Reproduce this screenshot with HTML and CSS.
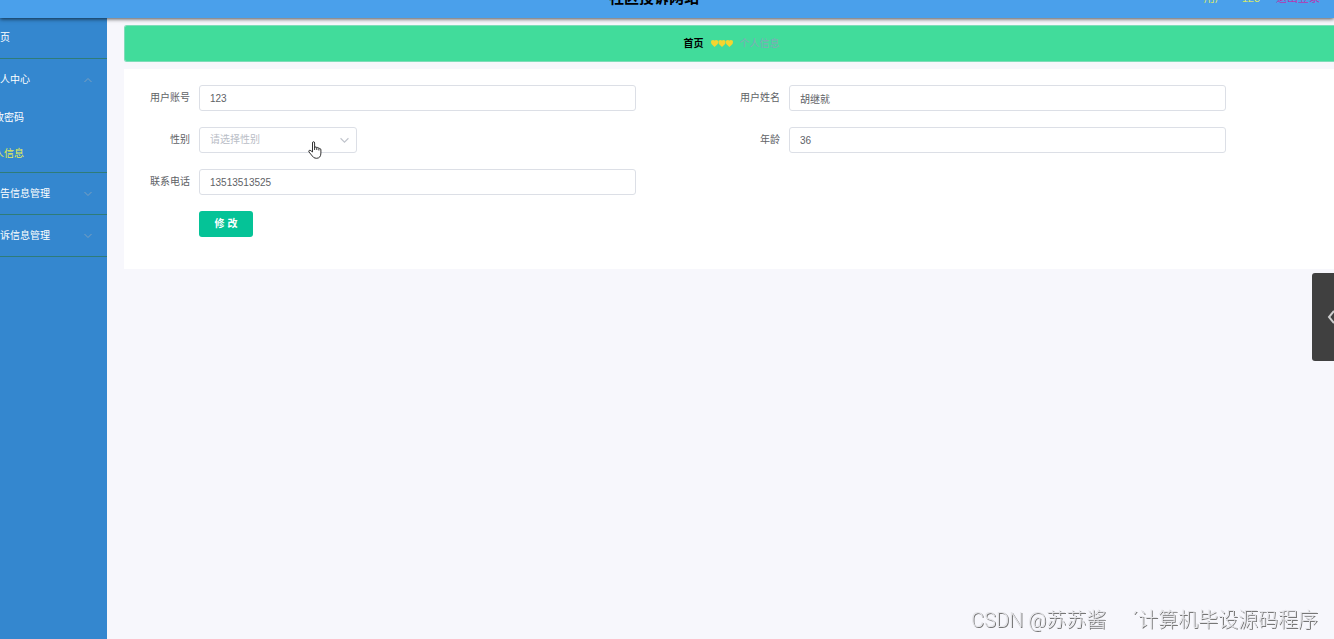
FILE: index.html
```html
<!DOCTYPE html>
<html lang="zh-CN">

<head>
    <meta charset="UTF-8">
    <meta name="viewport" content="width=device-width, initial-scale=1.0">
    <title>社区投诉网站</title>
    <link rel="stylesheet" href="styles.css">
</head>

<body>
    <header class="header">
        <h1 class="header__title">社区投诉网站</h1>
        <div class="header__user">
            <span>用户</span>
            <span>123</span>
            <a class="header__logout" href="#">退出登录</a>
        </div>
    </header>

    <div class="container">
        <nav class="sidebar">
            <a class="menu__title" href="#">首页</a>
            <div class="menu__group">
                <button class="menu__title" type="button">个人中心
                    <svg class="arrow" viewBox="0 0 8 8"><path d="M0.5 6 L4 2.5 L7.5 6" /></svg>
                </button>
                <a class="menu__item" href="#">修改密码</a>
                <a class="menu__item active" href="#">个人信息</a>
            </div>
            <button class="menu__title" type="button">公告信息管理
                <svg class="arrow" viewBox="0 0 8 8"><path d="M0.5 2 L4 5.5 L7.5 2" /></svg>
            </button>
            <button class="menu__title" type="button">投诉信息管理
                <svg class="arrow" viewBox="0 0 8 8"><path d="M0.5 2 L4 5.5 L7.5 2" /></svg>
            </button>
        </nav>

        <main class="main">
            <div class="breadcrumb">
                <a class="breadcrumb__home" href="#">首页</a>
                <svg class="breadcrumb__hearts" viewBox="0 0 22 7">
                    <path d="M3.6 7 L0.5 4 Q-0.2 2.6 0.2 0.8 Q1.8 -0.4 3.6 0.5 Q5.4 -0.4 7 0.8 Q7.4 2.6 6.7 4 Z" />
                    <path d="M11 7 L7.9 4 Q7.2 2.6 7.6 0.8 Q9.2 -0.4 11 0.5 Q12.8 -0.4 14.4 0.8 Q14.8 2.6 14.1 4 Z" />
                    <path d="M18.4 7 L15.3 4 Q14.6 2.6 15 0.8 Q16.6 -0.4 18.4 0.5 Q20.2 -0.4 21.8 0.8 Q22.2 2.6 21.5 4 Z" />
                </svg>
                <span class="breadcrumb__now">个人信息</span>
            </div>

            <form class="form">
                <div class="field">
                    <label for="account">用户账号</label>
                    <input id="account" type="text" value="123">
                </div>
                <div class="field">
                    <label for="name">用户姓名</label>
                    <input id="name" type="text" value="胡继就">
                </div>
                <div class="field">
                    <label for="gender">性别</label>
                    <div class="select">
                        <select id="gender">
                            <option value="">请选择性别</option>
                            <option>男</option>
                            <option>女</option>
                        </select>
                        <svg class="select__arrow" viewBox="0 0 8 8"><path d="M0.5 2 L4 5.5 L7.5 2" /></svg>
                        <svg class="pointer" viewBox="0 0 14 18">
                            <path d="M4.5 11 V2 Q4.5 0.7 5.5 0.7 Q6.6 0.7 6.6 2 V7 Q6.8 5.8 7.8 5.9 Q8.8 6 8.8 7 Q9.2 6.3 10 6.5 Q10.9 6.7 10.9 7.8 Q11.4 7.2 12.2 7.5 Q12.9 7.8 12.9 9 V12 Q12.9 17.3 8.3 17.3 Q5.6 17.3 4.3 15 L1 11 Q0.4 9.9 1.2 9.4 Q2.1 8.9 3 9.8 Z M6.6 7 V9 M8.8 7 V9 M10.9 8 V9.5" />
                        </svg>
                    </div>
                </div>
                <div class="field">
                    <label for="age">年龄</label>
                    <input id="age" type="text" value="36">
                </div>
                <div class="field">
                    <label for="phone">联系电话</label>
                    <input id="phone" type="text" value="13513513525">
                </div>
                <div class="form__btn">
                    <button class="submit" type="button">修 改</button>
                </div>
            </form>
        </main>
    </div>

    <button class="drawer" type="button" aria-label="展开">
        <svg viewBox="0 0 8 14"><path d="M7 1 L2 7 L7 13" /></svg>
    </button>

    <div class="watermark">
        <span>CSDN @苏苏酱</span>
        <span>´计算机毕设源码程序</span>
    </div>
</body>

</html>
```
FILE: styles.css
```css
* {
    margin: 0;
    padding: 0;
    box-sizing: border-box;
}

body {
    display: flex;
    flex-direction: column;
    height: 100vh;
    overflow: hidden;
    background-color: #f7f7fc;
    color: #606266;
    font-family: "Liberation Sans", "Noto Sans CJK SC", sans-serif;
    font-size: 10px;
    line-height: 16px;
}

a {
    color: inherit;
    text-decoration: none;
}

button,
input,
select {
    font: inherit;
    color: inherit;
}

button {
    border: 0;
    cursor: pointer;
}

svg {
    fill: none;
    stroke: currentColor;
}

/* header */
.header {
    display: grid;
    grid-template-columns: 1fr auto 1fr;
    align-items: center;
    flex-shrink: 0;
    height: 40px;
    margin-top: -22px;
    padding-right: 14px;
    background-color: #4aa0eb;
    box-shadow: 0 1px 4px rgba(0, 0, 0, 0.7);
    position: relative;
}

.header__title {
    grid-column: 2;
    margin-right: 12px;
    color: #000;
    font-size: 15px;
    line-height: 24px;
}

.header__user {
    display: flex;
    justify-content: flex-end;
    gap: 16px;
    color: #d5e86c;
    font-size: 11px;
}

.header__logout {
    color: #b637b0;
}

.container {
    display: flex;
    flex: 1;
}

/* sidebar */
.sidebar {
    width: 137px;
    margin-left: -30px;
    flex-shrink: 0;
    background-color: #3487cf;
    color: #fff;
}

.menu__title {
    display: flex;
    align-items: center;
    justify-content: space-between;
    width: 100%;
    height: 41px;
    padding: 0 15px 0 20px;
    background: none;
    border-bottom: 1px solid #2f7c78;
}

.menu__group {
    border-bottom: 1px solid #2f7c78;
}

.menu__group .menu__title {
    border-bottom: 0;
}

.menu__group ~ .menu__title {
    height: 42px;
}

.menu__item {
    display: flex;
    align-items: center;
    height: 36px;
    padding-left: 14px;
}

.menu__item.active {
    color: #e6ef51;
}

.arrow {
    width: 8px;
    height: 8px;
    color: #7ba0bf;
}

/* main */
.main {
    flex: 1;
    min-width: 0;
    padding: 7px 0 0 17px;
}

.breadcrumb {
    display: flex;
    align-items: center;
    justify-content: center;
    gap: 7px;
    height: 37px;
    margin-bottom: 7px;
    padding-left: 4px;
    background-color: #41dc9b;
    border: 1px solid #7fdcb9;
    border-right: 0;
    border-radius: 3px 0 0 3px;
}

.breadcrumb__home {
    color: #000;
    font-weight: bold;
}

.breadcrumb__hearts {
    width: 22px;
    height: 7px;
    fill: #f5d52f;
    stroke: none;
}

.breadcrumb__now {
    color: #84a9b8;
}

.form {
    display: grid;
    grid-template-columns: 1fr 1fr;
    row-gap: 16px;
    padding: 16px 30px 32px 0;
    background-color: #fff;
}

.field {
    display: flex;
    align-items: center;
    gap: 9px;
    padding-right: 78px;
}

.field label {
    width: 66px;
    flex-shrink: 0;
    line-height: 18px;
    text-align: right;
}

.field input,
.field select {
    width: 100%;
    height: 26px;
    padding: 0 10px;
    background-color: #fff;
    border: 1px solid #dcdfe6;
    border-radius: 3px;
}

.field input {
    flex: 1;
    min-width: 0;
}

.select {
    width: 158px;
    position: relative;
}

.field select {
    display: block;
    appearance: none;
    color: #b9bdc6;
    cursor: pointer;
}

.select__arrow {
    position: absolute;
    right: 8px;
    top: 9px;
    width: 9px;
    height: 9px;
    color: #c0c4cc;
    pointer-events: none;
}

.pointer {
    position: absolute;
    right: 35px;
    top: 14px;
    width: 14px;
    height: 18px;
    fill: #fff;
    stroke: #333;
    pointer-events: none;
}

.form__btn {
    grid-column: 1 / -1;
    padding-left: 75px;
}

.submit {
    display: block;
    width: 54px;
    height: 26px;
    background-color: #05c397;
    border-radius: 3px;
    color: #fff;
    font-weight: bold;
}

/* drawer handle */
.drawer {
    position: fixed;
    right: 0;
    top: 273px;
    width: 22px;
    height: 88px;
    overflow: hidden;
    background-color: #404040;
    border-radius: 3px 0 0 3px;
    color: #ccc;
}

.drawer svg {
    display: block;
    width: 8px;
    height: 14px;
    margin-left: 15px;
    stroke-width: 2;
}

.watermark {
    position: fixed;
    right: 16px;
    bottom: 4px;
    display: flex;
    gap: 26px;
    color: #e4e4e8;
    font-family: Roboto, "Noto Sans CJK SC", sans-serif;
    font-size: 20px;
    font-weight: 300;
    line-height: 30px;
    text-shadow: 1px 1px 0 #777;
    pointer-events: none;
}
```
